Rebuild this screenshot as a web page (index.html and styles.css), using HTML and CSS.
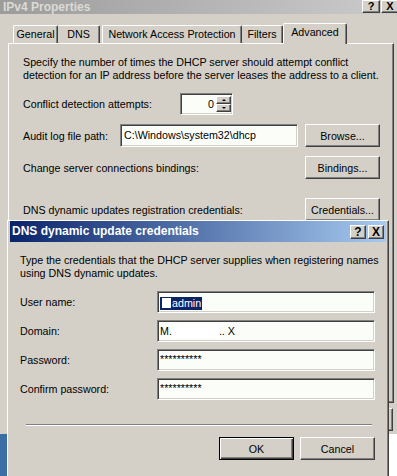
FILE: index.html
```html
<!DOCTYPE html>
<html>
<head>
<meta charset="utf-8">
<link rel="stylesheet" href="styles.css">
</head>
<body>
<div class="desktop">
  <div class="win">
    <div class="titlebar">
      <span class="title-text">IPv4 Properties</span>
      <div class="caps">
        <span class="cap">?</span><span class="cap">X</span>
      </div>
    </div>
    <div class="tabs">
      <div class="tab t-general">General</div>
      <div class="tab t-dns">DNS</div>
      <div class="tab t-nap">Network Access Protection</div>
      <div class="tab t-filters">Filters</div>
      <div class="tab t-adv active">Advanced</div>
    </div>
    <div class="panel">
      <p class="intro">Specify the number of times the DHCP server should attempt conflict<br>detection for an IP address before the server leases the address to a client.</p>
      <div class="row r-conflict">
        <span class="lbl l-conflict">Conflict detection attempts:</span>
        <div class="spin">
          <span class="spin-val">0</span>
          <div class="spin-btns">
            <span class="sb sb-up"></span>
            <span class="sb sb-down"></span>
          </div>
        </div>
      </div>
      <div class="row r-audit">
        <span class="lbl l-audit">Audit log file path:</span>
        <div class="field f-audit">C:\Windows\system32\dhcp</div>
        <span class="btn b-right">Browse...</span>
      </div>
      <div class="row r-bind">
        <span class="lbl">Change server connections bindings:</span>
        <span class="btn b-right">Bindings...</span>
      </div>
      <div class="row r-cred">
        <span class="lbl">DNS dynamic updates registration credentials:</span>
        <span class="btn b-right">Credentials...</span>
      </div>
    </div>
    <div class="win-btns">
      <span class="btn">OK</span>
      <span class="btn">Cancel</span>
      <span class="btn">Apply</span>
    </div>
  </div>
  <div class="below"></div>

  <div class="dlg">
    <div class="dlg-title">
      <span class="dlg-title-text">DNS dynamic update credentials</span>
      <div class="dcaps">
        <span class="dcap">?</span><span class="dcap">X</span>
      </div>
    </div>
    <div class="dlg-body">
      <p class="dlg-intro">Type the credentials that the DHCP server supplies when registering names<br>using DNS dynamic updates.</p>
      <div class="frow">
        <span class="flbl">User name:</span>
        <div class="field f-cred"><span class="sel"><span class="redact"></span>admin</span></div>
      </div>
      <div class="frow">
        <span class="flbl">Domain:</span>
        <div class="field f-cred">M.<span class="redact-w"></span>.. X</div>
      </div>
      <div class="frow">
        <span class="flbl">Password:</span>
        <div class="field f-cred pw">**********</div>
      </div>
      <div class="frow">
        <span class="flbl">Confirm password:</span>
        <div class="field f-cred pw">**********</div>
      </div>
      <div class="sep"></div>
      <div class="dlg-btns">
        <span class="btn default">OK</span>
        <span class="btn">Cancel</span>
      </div>
    </div>
  </div>
</div>
</body>
</html>
```
FILE: styles.css
```css
* { box-sizing: border-box; }
html, body { margin: 0; padding: 0; }
body {
  font-family: "Liberation Sans", Arial, sans-serif;
  font-size: 10.7px;
  color: #000;
  background: #3a6ea5;
  width: 397px;
  height: 476px;
  overflow: hidden;
}
.desktop { position: relative; width: 397px; height: 476px; }

.win {
  background: #d4d0c8;
  height: 434px;
  display: flex;
  flex-direction: column;
}
.titlebar {
  height: 14px;
  background: linear-gradient(to right, #9c9c9c, #cbcbcb);
  display: flex;
  justify-content: space-between;
  align-items: flex-start;
  overflow: hidden;
}
.title-text {
  font-weight: bold;
  font-size: 12px;
  line-height: 14px;
  color: #dcdad4;
  padding-left: 3px;
}
.caps { display: flex; gap: 1px; margin-right: -2px; }
.cap {
  width: 18px; height: 13px;
  background: #d4d0c8;
  border: 1px solid; border-color: #fff #404040 #404040 #fff;
  box-shadow: inset -1px -1px #808080;
  font-weight: bold; font-size: 11px; line-height: 11px; text-align: center;
}

.tabs {
  display: flex;
  align-items: flex-end;
  height: 29px;
  padding-left: 13px;
}
.tab {
  height: 18px;
  line-height: 16px;
  text-align: center;
  white-space: nowrap;
  background: #d4d0c8;
  border-top: 1px solid #fff;
  border-left: 1px solid #fff;
  border-right: 1px solid #404040;
  box-shadow: inset -1px 0 #808080;
  border-radius: 2px 2px 0 0;
}
.t-general { width: 45px; }
.t-dns { width: 42px; border-left: none; }
.t-nap { width: 140px; margin-left: 2px; }
.t-filters { width: 41px; border-left: none; }
.t-adv { width: 64px; }
.tab.active {
  height: 21px;
  line-height: 17px;
  margin-bottom: -1px;
  position: relative;
  z-index: 1;
}

.panel {
  margin-left: 8px;
  width: 386px;
  height: 360px;
  border-top: 1px solid #fff;
  border-left: 1px solid #fff;
  border-right: 1px solid #404040;
  border-bottom: 1px solid #404040;
  box-shadow: inset -1px -1px #808080;
  padding: 12px 13px 0 14px;
}
.intro { margin: 0; line-height: 13px; white-space: nowrap; }
.row { display: flex; align-items: center; height: 23px; white-space: nowrap; }
.r-conflict { margin-top: 11px; height: 22px; }
.r-audit { margin-top: 9px; }
.r-bind { margin-top: 9px; }
.r-cred { margin-top: 19px; }
.l-conflict { width: 157px; }
.l-audit { width: 97px; }

.field {
  background: #fbfdf8;
  border: 1px solid; border-color: #808080 #fff #fff #808080;
  box-shadow: inset 1px 1px #404040, inset -1px -1px #d4d0c8;
  height: 22px;
  line-height: 20px;
  padding-left: 3px;
  white-space: nowrap;
  overflow: hidden;
}
.f-audit { width: 178px; height: 23px; line-height: 21px; }

.spin {
  width: 53px; height: 22px;
  background: #fbfdf8;
  border: 1px solid; border-color: #808080 #fff #fff #808080;
  box-shadow: inset 1px 1px #404040, inset -1px -1px #d4d0c8;
  display: flex; align-items: center; justify-content: flex-end;
  padding: 2px 1px 2px 2px;
}
.spin-val { margin-right: 2px; line-height: 16px; }
.spin-btns { display: flex; flex-direction: column; width: 15px; height: 16px; }
.sb {
  flex: 1;
  background: #d4d0c8;
  border: 1px solid; border-color: #fff #404040 #404040 #fff;
  box-shadow: inset -1px -1px #808080;
  display: flex; align-items: center; justify-content: center;
}
.sb::after { content: ""; width: 0; height: 0; border-left: 2px solid transparent; border-right: 2px solid transparent; }
.sb-up::after { border-bottom: 2px solid #000; }
.sb-down::after { border-top: 2px solid #000; }

.btn {
  display: inline-flex; align-items: center; justify-content: center;
  width: 75px; height: 23px;
  flex-shrink: 0;
  background: #d4d0c8;
  border: 1px solid; border-color: #fff #404040 #404040 #fff;
  box-shadow: inset -1px -1px #808080;
  white-space: nowrap;
}
.b-right { margin-left: auto; }
.r-audit .b-right { margin-left: 7px; }
.btn.default {
  border: 1px solid #000;
  box-shadow: inset 1px 1px #fff, inset -1px -1px #404040, inset -2px -2px #808080;
}

.win-btns {
  display: flex; justify-content: flex-end; gap: 6px;
  padding: 5px 4px 0 0;
}

.below {
  height: 42px;
  background: linear-gradient(to right, #3a6ea5 0 8px, #ffffff 8px);
}

/* inner dialog (floats over the parent window) */
.dlg {
  position: absolute;
  left: 7px; top: 220px;
  width: 382px; height: 262px;
  background: #d4d0c8;
  border: 1px solid; border-color: #fff #404040 #404040 #fff;
  box-shadow: inset -1px -1px #808080;
  padding: 0 2px 0 1px;
}
.dlg-title {
  height: 21px;
  margin-left: 1px;
  background: linear-gradient(to right, #0a246a, #a6caf0);
  display: flex; align-items: center; justify-content: space-between;
  padding: 0 2px 0 2px;
}
.dlg-title-text { color: #fff; font-weight: bold; font-size: 12px; line-height: 21px; white-space: nowrap; }
.dcaps { display: flex; gap: 2px; }
.dcap {
  width: 16px; height: 14px;
  background: #d4d0c8;
  border: 1px solid; border-color: #fff #404040 #404040 #fff;
  box-shadow: inset -1px -1px #808080;
  font-weight: bold; font-size: 12px; line-height: 12px; text-align: center;
}
.dlg-body { padding: 12px 11px 0 11px; }
.dlg-intro { margin: 0 0 11px 0; line-height: 13px; white-space: nowrap; }
.frow { display: flex; align-items: center; height: 22px; margin-bottom: 7px; white-space: nowrap; }
.flbl { width: 137px; flex-shrink: 0; }
.f-cred { width: 220px; padding-left: 2px; }
.pw { line-height: 18px; }
.sel { background: #0a246a; color: #fff; display: inline-block; line-height: 13px; padding: 0 1px 0 2px; vertical-align: middle; }
.redact { display: inline-block; width: 9px; height: 10px; background: #fff; vertical-align: -1px; margin-right: 1px; }
.redact-w { display: inline-block; width: 47px; height: 14px; background: #fff; vertical-align: -3px; }

.sep {
  margin: 24px 3px 0 6px;
  height: 2px;
  border-top: 1px solid #808080;
  border-bottom: 1px solid #fff;
}
.dlg-btns {
  display: flex; justify-content: flex-end; gap: 6px;
  margin-top: 11px;
}
```
